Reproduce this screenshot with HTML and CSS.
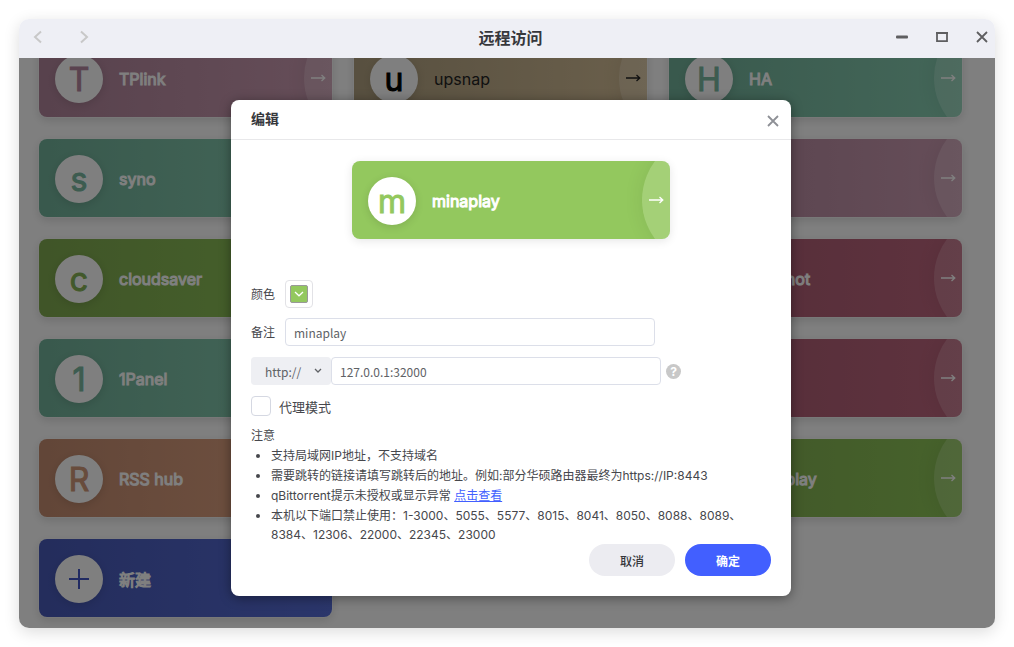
FILE: index.html
```html
<!DOCTYPE html>
<html lang="zh-CN">

<head>
  <meta charset="UTF-8">
  <meta name="viewport" content="width=device-width, initial-scale=1.0">
  <title>远程访问</title>
  <link rel="stylesheet" href="styles.css">
</head>

<body>
  <!-- shared icons -->
  <svg class="sprite" aria-hidden="true">
    <symbol id="arrow" viewBox="0 0 16 10">
      <path d="M1 5h14M11.5 2l3.3 3-3.3 3" fill="none" stroke="currentColor" stroke-width="1.3" />
    </symbol>
    <symbol id="cross" viewBox="0 0 12 12">
      <path d="M1 1l10 10M11 1L1 11" fill="none" stroke="currentColor" stroke-width="1.8" />
    </symbol>
  </svg>

  <div class="window">
    <header class="titlebar">
      <nav class="titlebar-nav">
        <button type="button" aria-label="后退"><svg width="10" height="14" viewBox="0 0 10 14"><path d="M8 1.500L2 7l6 5.500" /></svg></button>
        <button type="button" aria-label="前进"><svg width="10" height="14" viewBox="0 0 10 14"><path d="M2 1.500L8 7l-6 5.500" /></svg></button>
      </nav>
      <h1>远程访问</h1>
      <div class="titlebar-actions">
        <button type="button" aria-label="最小化"><svg width="12" height="12" viewBox="0 0 12 12"><rect y="4.500" width="12" height="3" rx="1" fill="currentColor" /></svg></button>
        <button type="button" aria-label="最大化"><svg width="12" height="12" viewBox="0 0 12 12"><path d="M1 2v8.200h10V2z" fill="none" stroke="currentColor" stroke-width="1.800" /><path d="M0 1h12v2H0z" fill="currentColor" /></svg></button>
        <button type="button" aria-label="关闭"><svg width="12" height="12"><use href="#cross" /></svg></button>
      </div>
    </header>

    <main class="content">
      <div class="card-grid">
        <a href="#" class="card pink"><span class="card-icon">T</span><span class="card-name">TPlink</span><span class="card-go"><svg><use href="#arrow" /></svg></span></a>
        <a href="#" class="card tan dark"><span class="card-icon">u</span><span class="card-name">upsnap</span><span class="card-go"><svg><use href="#arrow" /></svg></span></a>
        <a href="#" class="card teal"><span class="card-icon">H</span><span class="card-name">HA</span><span class="card-go"><svg><use href="#arrow" /></svg></span></a>

        <a href="#" class="card teal"><span class="card-icon">s</span><span class="card-name">syno</span><span class="card-go"><svg><use href="#arrow" /></svg></span></a>
        <a href="#" class="card tan"><span class="card-icon"></span></a>
        <a href="#" class="card pink"><span class="card-icon"></span><span class="card-go"><svg><use href="#arrow" /></svg></span></a>

        <a href="#" class="card green"><span class="card-icon">c</span><span class="card-name">cloudsaver</span><span class="card-go"><svg><use href="#arrow" /></svg></span></a>
        <a href="#" class="card teal"><span class="card-icon"></span></a>
        <a href="#" class="card crimson"><span class="card-icon"></span><span class="card-name">oneshot</span><span class="card-go"><svg><use href="#arrow" /></svg></span></a>

        <a href="#" class="card teal"><span class="card-icon">1</span><span class="card-name">1Panel</span><span class="card-go"><svg><use href="#arrow" /></svg></span></a>
        <a href="#" class="card pink"><span class="card-icon"></span></a>
        <a href="#" class="card crimson"><span class="card-icon"></span><span class="card-go"><svg><use href="#arrow" /></svg></span></a>

        <a href="#" class="card orange"><span class="card-icon">R</span><span class="card-name">RSS hub</span><span class="card-go"><svg><use href="#arrow" /></svg></span></a>
        <a href="#" class="card green"><span class="card-icon"></span></a>
        <a href="#" class="card green"><span class="card-icon"></span><span class="card-name">minaplay</span><span class="card-go"><svg><use href="#arrow" /></svg></span></a>

        <button type="button" class="card blue">
          <span class="card-icon"><svg width="20" height="20" viewBox="0 0 20 20"><path d="M10 0v20M0 10h20" stroke="currentColor" stroke-width="2" /></svg></span>
          <span class="card-name">新建</span>
        </button>
      </div>

      <div class="overlay">
        <form class="dialog" role="dialog" aria-labelledby="dialog-title">
          <div class="dialog-header">
            <h2 id="dialog-title">编辑</h2>
            <button type="button" class="dialog-close" aria-label="关闭"><svg width="12" height="12"><use href="#cross" /></svg></button>
          </div>

          <div class="dialog-body">
            <div class="card preview"><span class="card-icon">m</span><span class="card-name">minaplay</span><span class="card-go"><svg><use href="#arrow" /></svg></span></div>

            <div class="row">
              <label for="color">颜色</label>
              <button type="button" id="color" class="color-picker">
                <span class="swatch"><svg width="10" height="6" viewBox="0 0 10 6"><path d="M1 1l4 3.800L9 1" fill="none" stroke="currentColor" stroke-width="1.300" /></svg></span>
              </button>
            </div>

            <div class="row">
              <label for="remark">备注</label>
              <input type="text" id="remark" class="text-input" value="minaplay">
            </div>

            <div class="row address">
              <select class="protocol" aria-label="协议">
                <option>http://</option>
                <option>https://</option>
              </select>
              <input type="text" class="text-input" aria-label="地址" value="127.0.0.1:32000">
              <span class="help">?</span>
            </div>

            <label class="check">
              <input type="checkbox" name="proxy">
              代理模式
            </label>

            <div class="notes">
              <p>注意</p>
              <ul>
                <li>支持局域网IP地址，不支持域名</li>
                <li>需要跳转的链接请填写跳转后的地址。例如:部分华硕路由器最终为https://IP:8443</li>
                <li>qBittorrent提示未授权或显示异常 <a href="#">点击查看</a></li>
                <li>本机以下端口禁止使用：1-3000、5055、5577、8015、8041、8050、8088、8089、8384、12306、22000、22345、23000</li>
              </ul>
            </div>
          </div>

          <div class="dialog-footer">
            <button type="button" class="btn">取消</button>
            <button type="submit" class="btn primary">确定</button>
          </div>
        </form>
      </div>
    </main>
  </div>
</body>

</html>
```
FILE: styles.css
```css
* {
  box-sizing: border-box;
}

body {
  margin: 0;
  background: #fff;
  color: #36373c;
  font: 12px Inter, "Noto Sans CJK SC", sans-serif;
}

button,
input,
select {
  margin: 0;
  padding: 0;
  border: 0;
  background: none;
  color: inherit;
  font: inherit;
}

h1,
h2,
p,
ul {
  margin: 0;
}

.sprite {
  display: none;
}

/* window frame */
.window {
  display: flex;
  flex-direction: column;
  height: calc(100vh - 38px);
  min-height: 580px;
  margin: 19px;
  border-radius: 10px;
  overflow: hidden;
  box-shadow: 0 4px 16px rgba(0, 0, 0, 0.14);
}

.titlebar {
  display: grid;
  grid-template-columns: 1fr auto 1fr;
  align-items: center;
  height: 39px;
  padding: 0 7px 3px 14px;
  background: #eeeff5;
}

.titlebar h1 {
  font-size: 16px;
  font-weight: 700;
}

.titlebar-nav {
  display: flex;
  gap: 36px;
  color: #c8c8c8;
}

.titlebar-nav svg {
  display: block;
  fill: none;
  stroke: currentColor;
  stroke-width: 2;
}

.titlebar-actions {
  display: flex;
  justify-content: flex-end;
  gap: 28px;
  color: #5e5e60;
}

.titlebar-actions svg {
  display: block;
}

/* the list is scrolled to its end, so the first row is cut off */
.content {
  position: relative;
  display: flex;
  flex: 1;
  align-items: flex-end;
  min-height: 0;
  padding: 0 33px 11px 20px;
  overflow: hidden;
}

.card-grid {
  display: grid;
  flex: 1;
  grid-template-columns: repeat(3, 1fr);
  gap: 22px;
}

/* cards */
.card {
  position: relative;
  display: flex;
  align-items: center;
  gap: 16px;
  height: 78px;
  padding: 2px 16px 0;
  border-radius: 8px;
  overflow: hidden;
  color: #fff;
  text-align: left;
  text-decoration: none;
  box-shadow: 0 0 1px 1px rgba(255, 255, 255, 0.5), 0 3px 10px rgba(0, 0, 0, 0.15);
}

.card-icon {
  display: flex;
  flex: none;
  align-items: center;
  justify-content: center;
  width: 48px;
  height: 48px;
  border-radius: 50%;
  background: #fff;
  color: var(--tone);
  font-size: 32px;
  -webkit-text-stroke: 1px currentColor;
  box-shadow: 0 2px 8px rgba(0, 0, 0, 0.12);
}

.card-name {
  font-size: 16px;
  -webkit-text-stroke: 1px currentColor;
}

.card-go {
  position: absolute;
  top: -26px;
  right: -102px;
  display: flex;
  align-items: center;
  width: 130px;
  height: 130px;
  padding-left: 6px;
  border-radius: 50%;
  background: rgba(255, 255, 255, 0.16);
  box-shadow: 0 0 20px rgba(0, 0, 0, 0.08);
}

.card-go svg {
  width: 16px;
  height: 10px;
}

.pink {
  --tone: #b4869e;
  background: linear-gradient(90deg, #b0849a, #cc9cb2);
}

.teal {
  --tone: #7ab8a0;
  background: linear-gradient(90deg, #72b29a, #88ceb2);
}

.tan {
  --tone: #b5a280;
  background: linear-gradient(90deg, #b0a080, #d6c098);
}

.green {
  --tone: #84b254;
  background: linear-gradient(90deg, #80aa50, #8ec658);
}

.crimson {
  --tone: #ae5e76;
  background: linear-gradient(90deg, #a85a70, #be667e);
}

.orange {
  --tone: #d09878;
  background: linear-gradient(90deg, #c48c70, #e4a684);
}

.blue {
  --tone: #4257c4;
  background: linear-gradient(90deg, #485ab8, #566cd6);
}

.dark {
  --tone: #000;
  color: #222;
}

.dark .card-name {
  -webkit-text-stroke: 0;
}

/* dialog */
.overlay {
  position: absolute;
  inset: 0;
  display: flex;
  align-items: flex-start;
  justify-content: center;
  padding: 42px 0 0 8px;
  background: rgba(0, 0, 0, 0.5);
}

.dialog {
  width: 560px;
  border-radius: 8px;
  background: #fff;
  box-shadow: 0 2px 12px rgba(0, 0, 0, 0.4);
}

.dialog-header {
  display: flex;
  align-items: center;
  justify-content: space-between;
  height: 40px;
  padding: 0 12px 0 20px;
  border-bottom: 1px solid #e8e8ea;
}

.dialog-header h2 {
  padding-bottom: 3px;
  font-size: 14px;
  font-weight: 700;
}

.dialog-close {
  padding-top: 2px;
  color: #8e9096;
}

.dialog-close svg {
  display: block;
}

.dialog-body {
  padding: 21px 20px 0;
}

.preview {
  --tone: #93c85e;
  width: 318px;
  margin: 0 auto 41px;
  background: #93c85e;
  box-shadow: 0 2px 10px rgba(0, 0, 0, 0.1);
}

.row {
  display: flex;
  align-items: center;
  gap: 10px;
  height: 28px;
  margin-bottom: 10px;
}

.row label {
  width: 24px;
  padding-bottom: 2px;
}

.color-picker {
  width: 28px;
  height: 28px;
  padding: 4px;
  border: 1px solid #e2e2e6;
  border-radius: 4px;
}

.swatch {
  display: flex;
  align-items: center;
  justify-content: center;
  height: 18px;
  border: 1px solid #999;
  border-radius: 2px;
  background: #93c85e;
  color: #fff;
}

.text-input {
  width: 370px;
  height: 28px;
  padding: 0 8px;
  border: 1px solid #dcdfe9;
  border-radius: 4px;
  color: #606266;
  font: 12px "Noto Sans CJK SC", sans-serif;
}

.address {
  gap: 0;
  margin: 11px 0;
}

.address .text-input {
  width: 330px;
}

.protocol {
  width: 80px;
  height: 28px;
  padding-left: 14px;
  border-radius: 4px;
  appearance: none;
  background: #eeeff3 url("data:image/svg+xml,%3Csvg xmlns='http://www.w3.org/2000/svg' width='8' height='6'%3E%3Cpath d='M1 1l3 3 3-3' fill='none' stroke='%23606266' stroke-width='1.300'/%3E%3C/svg%3E") no-repeat right 9px center;
  color: #606266;
  font: 12px "Noto Sans CJK SC", sans-serif;
}

.help {
  display: flex;
  align-items: center;
  justify-content: center;
  width: 15px;
  height: 15px;
  margin-left: 5px;
  border-radius: 50%;
  background: #c8c8c8;
  color: #fff;
  font-weight: 700;
}

.check {
  display: flex;
  align-items: center;
  gap: 8px;
  font-size: 13px;
}

.check input {
  width: 20px;
  height: 20px;
  border: 1px solid #d5d8e2;
  border-radius: 4px;
  appearance: none;
}

.row label,
.check,
.notes {
  color: #46474c;
}

.notes {
  margin-top: 10px;
  line-height: 19px;
}

.notes ul {
  padding-left: 20px;
}

.notes li {
  margin-top: 1px;
}

.notes a {
  color: #425fff;
}

.dialog-footer {
  display: flex;
  justify-content: flex-end;
  gap: 10px;
  padding: 0 20px 20px;
}

.btn {
  width: 86px;
  height: 32px;
  border-radius: 16px;
  background: #ececf1;
  font-weight: 500;
}

.btn.primary {
  background: #425fff;
  color: #fff;
  font-weight: 700;
}
```
